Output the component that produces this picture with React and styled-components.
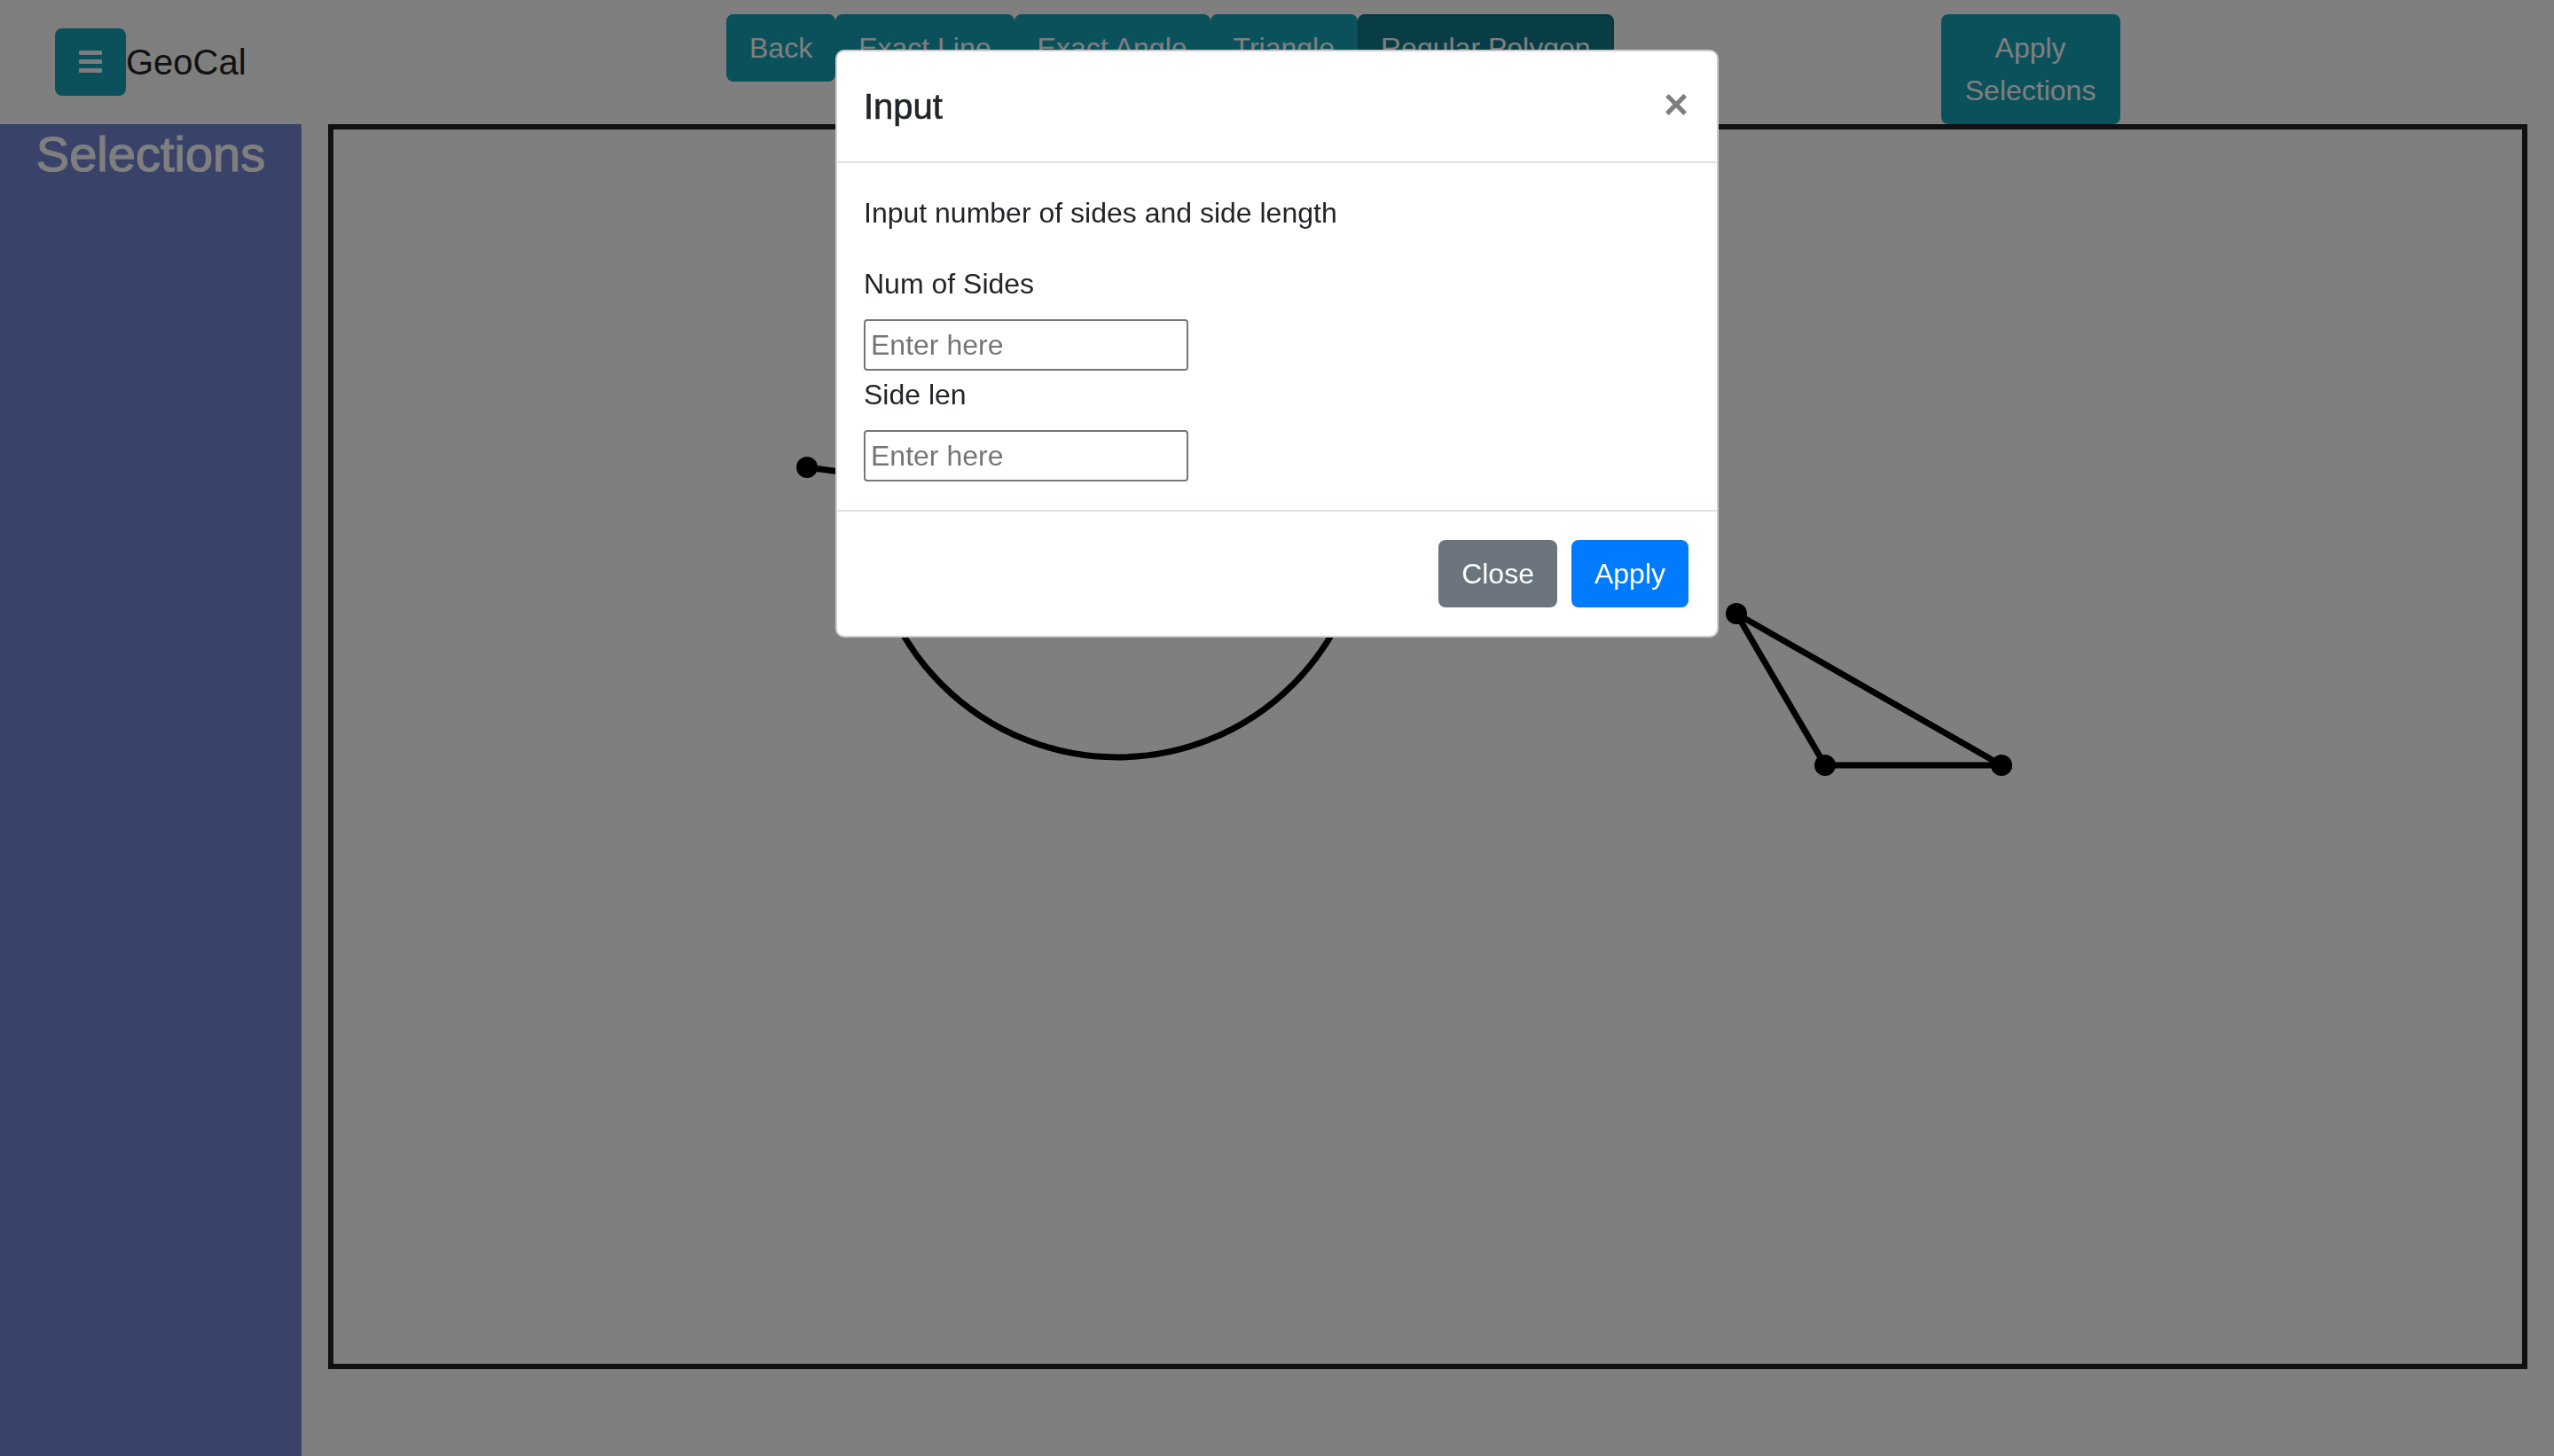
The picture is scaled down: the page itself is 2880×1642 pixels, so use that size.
import React from 'react';
import styled, { createGlobalStyle } from 'styled-components';

const GlobalStyle = createGlobalStyle`
  * { box-sizing: border-box; }
  html, body {
    margin: 0;
    padding: 0;
    background: #fff;
    font-family: "Liberation Sans", Arial, sans-serif;
    font-size: 32px;
    line-height: 1.5;
    color: #212529;
  }
`;

const Page = styled.div`
  width: 2880px;
  height: 1642px;
  overflow: hidden;
  display: flex;
  flex-direction: column;
`;

const TopBar = styled.div`
  display: flex;
  align-items: flex-start;
  height: 140px;
  padding: 16px 0 0 31px;
  flex-shrink: 0;
`;

const Navbar = styled.nav`
  display: flex;
  align-items: center;
  width: 420px;
  height: 107px;
  padding: 16px 31px;
  background: #fbfcfb;
`;

const MenuButton = styled.button`
  display: flex;
  align-items: center;
  justify-content: center;
  width: 80px;
  height: 76px;
  padding: 0;
  border: 2px solid #17a2b8;
  border-radius: 8px;
  background: #17a2b8;
`;

const Brand = styled.span`
  font-size: 40px;
  line-height: 1.5;
  color: #222;
`;

const ToolGroup = styled.div`
  display: flex;
  margin-left: 368px;
`;

const ToolButton = styled.button`
  height: 76px;
  padding: 12px 24px;
  font-family: inherit;
  font-size: 32px;
  line-height: 1.5;
  color: #fff;
  white-space: nowrap;
  border: 2px solid ${p => (p.$active ? '#10707f' : '#17a2b8')};
  border-radius: 8px;
  background: ${p => (p.$active ? '#117a8b' : '#17a2b8')};
`;

const ApplySelections = styled(ToolButton)`
  width: 202px;
  height: 124px;
  margin-left: 369px;
  white-space: normal;
  text-align: center;
`;

const Body = styled.div`
  display: flex;
  flex: 1;
`;

const Sidebar = styled.aside`
  width: 340px;
  background: #7386d5;
  color: #fff;
  text-align: center;
`;

const SidebarTitle = styled.h3`
  margin: 0;
  font-size: 56px;
  font-weight: 500;
  line-height: 1.2;
  -webkit-text-stroke: 1.2px #fff;
`;

const Canvas = styled.div`
  width: 2480px;
  height: 1404px;
  margin-left: 30px;
  border: 6px solid #222;
  background: #fff;
`;

const Backdrop = styled.div`
  position: fixed;
  inset: 0;
  background: rgba(0, 0, 0, 0.5);
`;

const ModalWrap = styled.div`
  position: fixed;
  inset: 0;
`;

const Dialog = styled.div`
  width: 996px;
  margin: 56px auto;
  background: #fff;
  border: 2px solid rgba(0, 0, 0, 0.2);
  border-radius: 10px;
`;

const ModalHeader = styled.div`
  display: flex;
  align-items: flex-start;
  justify-content: space-between;
  padding: 32px 32px 32px 30px;
  border-bottom: 2px solid #dee2e6;
`;

const ModalTitle = styled.h5`
  margin: 0;
  font-size: 40px;
  font-weight: 500;
  line-height: 1.5;
  -webkit-text-stroke: 0.6px #212529;
`;

const CloseX = styled.button`
  margin: -28px -32px -32px auto;
  padding: 32px;
  border: 0;
  background: transparent;
  font-family: inherit;
  font-size: 48px;
  font-weight: 700;
  line-height: 1;
  color: #000;
  opacity: 0.5;
  text-shadow: 0 2px 0 #fff;
`;

const ModalBody = styled.div`
  padding: 32px 32px 29px 30px;
`;

const Lead = styled.p`
  margin: 0 0 32px;
`;

const Label = styled.label`
  display: inline-block;
  margin-bottom: 16px;
`;

const Field = styled.input`
  display: block;
  width: 366px;
  height: 58px;
  margin-bottom: 3px;
  padding: 2px 6px;
  font-family: inherit;
  font-size: 32px;
  color: #212529;
  border: 2px solid #767676;
  border-radius: 4px;

  &::placeholder {
    color: #757575;
  }
`;

const ModalFooter = styled.div`
  display: flex;
  justify-content: flex-end;
  align-items: center;
  padding: 24px;
  border-top: 2px solid #dee2e6;
`;

const FooterButton = styled.button`
  margin: 8px;
  padding: 12px 24px;
  font-family: inherit;
  font-size: 32px;
  line-height: 1.5;
  color: #fff;
  border: 2px solid ${p => p.$color};
  border-radius: 8px;
  background: ${p => p.$color};
`;

const BarsIcon = () => (
  <svg width="26" height="25" viewBox="0 0 26 25">
    <rect x="0" y="0" width="26" height="5" rx="1" fill="#f8f9fa" />
    <rect x="0" y="10" width="26" height="5" rx="1" fill="#f8f9fa" />
    <rect x="0" y="20" width="26" height="5" rx="1" fill="#f8f9fa" />
  </svg>
);

const tools = ['Back', 'Exact Line', 'Exact Angle', 'Triangle', 'Regular Polygon'];

const triangle = [
  [1582, 546],
  [1682, 717],
  [1881, 717],
];

const Drawing = () => (
  <svg width="2468" height="1392" viewBox="0 0 2468 1392">
    <g stroke="#000" strokeWidth="7" fill="none">
      <circle cx="884" cy="428" r="280" />
      <line x1="534" y1="381" x2="884" y2="428" />
      <polygon points={triangle.map(p => p.join(',')).join(' ')} />
    </g>
    <circle cx="534" cy="381" r="12" fill="#000" />
    {triangle.map(([x, y]) => (
      <circle key={x} cx={x} cy={y} r="12" fill="#000" />
    ))}
  </svg>
);

const App = () => {
  return (
    <>
      <GlobalStyle />
      <Page>
        <TopBar>
          <Navbar>
            <MenuButton>
              <BarsIcon />
            </MenuButton>
            <Brand>GeoCal</Brand>
          </Navbar>
          <ToolGroup>
            {tools.map(t => (
              <ToolButton key={t} $active={t === 'Regular Polygon'}>
                {t}
              </ToolButton>
            ))}
          </ToolGroup>
          <ApplySelections>Apply Selections</ApplySelections>
        </TopBar>
        <Body>
          <Sidebar>
            <SidebarTitle>Selections</SidebarTitle>
          </Sidebar>
          <Canvas>
            <Drawing />
          </Canvas>
        </Body>
      </Page>

      <Backdrop />
      <ModalWrap>
        <Dialog>
          <ModalHeader>
            <ModalTitle>Input</ModalTitle>
            <CloseX aria-label="Close">×</CloseX>
          </ModalHeader>
          <ModalBody>
            <Lead>Input number of sides and side length</Lead>
            <Label>Num of Sides</Label>
            <Field placeholder="Enter here" />
            <Label>Side len</Label>
            <Field placeholder="Enter here" />
          </ModalBody>
          <ModalFooter>
            <FooterButton $color="#6c757d">Close</FooterButton>
            <FooterButton $color="#007bff">Apply</FooterButton>
          </ModalFooter>
        </Dialog>
      </ModalWrap>
    </>
  );
};

export default App;
